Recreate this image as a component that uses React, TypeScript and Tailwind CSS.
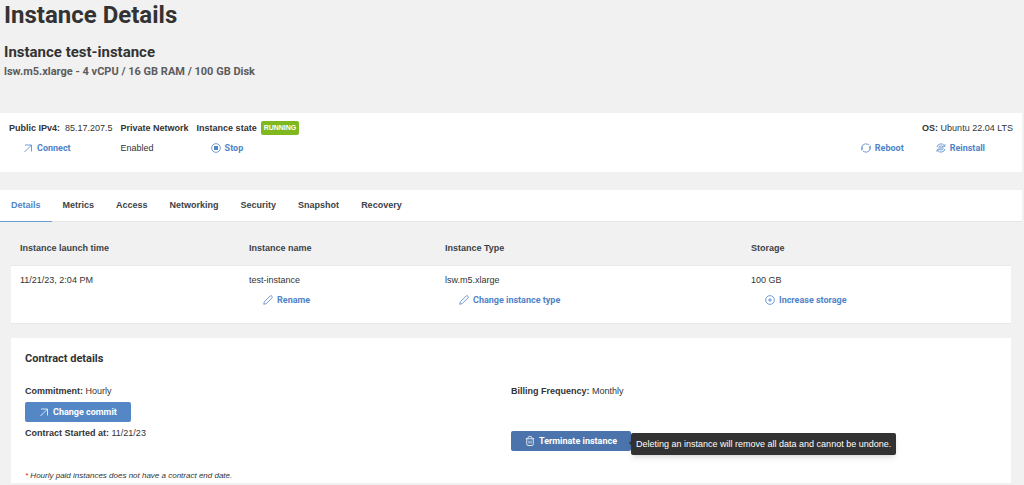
import type { ReactNode } from 'react';

const heading = "font-['Roboto','Noto_Sans',sans-serif]";

type IconProps = { children: ReactNode };

function Icon({ children }: IconProps) {
  return (
    <svg
      viewBox="0 0 20 20"
      className="size-[10px] shrink-0"
      fill="none"
      stroke="currentColor"
      strokeWidth="1.6"
      aria-hidden="true"
    >
      {children}
    </svg>
  );
}

const ArrowIcon = () => (
  <Icon>
    <path d="M4 4h13v13M17 4L3 18" />
  </Icon>
);

const StopIcon = () => (
  <Icon>
    <circle cx="10" cy="10" r="8.7" />
    <rect x="6" y="6" width="8" height="8" fill="currentColor" stroke="none" />
  </Icon>
);

const RebootIcon = () => (
  <Icon>
    <path d="M2.400 13.500A8.200 8.200 0 0 1 13.500 2.600M17.600 6.500A8.200 8.200 0 0 1 6.500 17.400" />
    <path d="M2.200 7.500v6h-2M17.800 12.500v-6h2M4 16l2.500 1.400M16 4l-2.500-1.400" />
  </Icon>
);

const ReinstallIcon = () => (
  <Icon>
    <path d="M2 8A8.200 8.200 0 0 1 17 5.700M18 12A8.200 8.200 0 0 1 3 14.300" />
    <path d="M18 2.500v4h-4M2 17.500v-4h4" />
    <path d="M5.800 10a4.200 4.200 0 0 1 8.400 0a4.200 4.200 0 0 1-8.400 0" />
    <circle cx="10" cy="10" r="1.6" fill="currentColor" stroke="none" />
  </Icon>
);

const PencilIcon = () => (
  <Icon>
    <path d="M1.500 18.500l1.200-5L14.200 2a2.200 2.200 0 0 1 3.100 0l.7.7a2.200 2.200 0 0 1 0 3.100L6.500 17.300z" />
  </Icon>
);

const PlusIcon = () => (
  <Icon>
    <circle cx="10" cy="10" r="8.7" />
    <path d="M10 6v8M6 10h8" />
  </Icon>
);

const TrashIcon = () => (
  <Icon>
    <path d="M1.500 5.500h17M6 5V3.200C6 2 6.800 1.200 8 1.200h4c1.200 0 2 .8 2 2V5" />
    <path d="M3.500 5.500v11c0 1.500 1 2.500 2.500 2.500h8c1.500 0 2.500-1 2.500-2.500v-11M8 9.500v5.500M12 9.500v5.500" />
  </Icon>
);

function LinkButton({ icon, children }: { icon: ReactNode; children: ReactNode }) {
  return (
    <button
      type="button"
      className={`${heading} flex h-5 cursor-pointer items-center gap-1 whitespace-nowrap px-3.5 text-[9px] font-bold text-[#4f84c8]`}
    >
      {icon}
      {children}
    </button>
  );
}

const tabs = ['Details', 'Metrics', 'Access', 'Networking', 'Security', 'Snapshot', 'Recovery'];

export default function App() {
  return (
    <div className="min-h-screen bg-[#f1f1f1] pr-0.5 pb-0.5 font-['Liberation_Sans',Arial,sans-serif] text-[9px] leading-5 text-[#333]">
      <header className={`${heading} h-[113px] pl-1`}>
        <h1 className="text-2xl leading-[30px] font-bold">Instance Details</h1>
        <h2 className="mt-3 text-[15px] leading-5 font-bold">Instance test-instance</h2>
        <p className="text-[11px] font-bold text-[#5c5c5c]">lsw.m5.xlarge - 4 vCPU / 16 GB RAM / 100 GB Disk</p>
      </header>

      <section className="flex justify-between bg-white px-[9px] pt-[5px] pb-[14px]">
        <div className="flex gap-2">
          <div>
            <p>
              <b>Public IPv4:</b>&nbsp; 85.17.207.5
            </p>
            <LinkButton icon={<ArrowIcon />}>Connect</LinkButton>
          </div>
          <div>
            <p className="font-bold">Private Network</p>
            <p>Enabled</p>
          </div>
          <div>
            <p className="flex items-center gap-1">
              <b>Instance state</b>
              <span className="rounded-[2px] bg-[#80b91f] px-[3px] text-[7px] leading-[14px] font-bold text-white">
                RUNNING
              </span>
            </p>
            <LinkButton icon={<StopIcon />}>Stop</LinkButton>
          </div>
        </div>
        <div>
          <p className="text-right">
            <b>OS:</b> Ubuntu 22.04 LTS
          </p>
          <div className="flex gap-1 pr-3.5">
            <LinkButton icon={<RebootIcon />}>Reboot</LinkButton>
            <LinkButton icon={<ReinstallIcon />}>Reinstall</LinkButton>
          </div>
        </div>
      </section>

      <nav className="mt-[18px] flex border-b border-[#e6e6e6] bg-white">
        {tabs.map((tab, i) => (
          <a
            key={tab}
            href={`#${tab.toLowerCase()}`}
            aria-current={i === 0 ? 'page' : undefined}
            className={
              i === 0
                ? '-mb-px border-b border-[#6f9ad2] px-[11px] leading-[31px] font-bold text-[#4f84c8]'
                : 'px-[11px] leading-[31px] font-bold text-[#3c4248]'
            }
          >
            {tab}
          </a>
        ))}
      </nav>

      <main className="px-[11px]">
        <table className="w-full table-fixed border-collapse text-left">
          <thead>
            <tr className="h-[43px] border-b border-[#e8e8e8] text-[#3c4248]">
              <th className="w-[22.9%] pt-2.5 pl-[9px]">Instance launch time</th>
              <th className="w-[19.6%] pt-2.5 pl-[9px]">Instance name</th>
              <th className="w-[30.6%] pt-2.5 pl-[9px]">Instance Type</th>
              <th className="pt-2.5 pl-[9px]">Storage</th>
            </tr>
          </thead>
          <tbody>
            <tr className="border-b border-[#e8e8e8] bg-white align-top">
              <td className="pt-1 pb-[13px] pl-[9px]">11/21/23, 2:04 PM</td>
              <td className="pt-1 pb-[13px] pl-[9px]">
                test-instance
                <LinkButton icon={<PencilIcon />}>Rename</LinkButton>
              </td>
              <td className="pt-1 pb-[13px] pl-[9px]">
                lsw.m5.xlarge
                <LinkButton icon={<PencilIcon />}>Change instance type</LinkButton>
              </td>
              <td className="pt-1 pb-[13px] pl-[9px]">
                100 GB
                <LinkButton icon={<PlusIcon />}>Increase storage</LinkButton>
              </td>
            </tr>
          </tbody>
        </table>

        <section className="mt-[14px] bg-white px-3.5 pt-[11px]">
          <h3 className={`${heading} text-[11px] font-bold`}>Contract details</h3>
          <div className="mt-3 grid grid-cols-2">
            <div>
              <p>
                <b>Commitment:</b> Hourly
              </p>
              <button
                type="button"
                className={`${heading} mt-px mb-px flex h-5 cursor-pointer items-center gap-1 rounded-[2px] bg-[#5586c6] px-3.5 text-[9px] font-bold text-white`}
              >
                <ArrowIcon />
                Change commit
              </button>
              <p>
                <b>Contract Started at:</b> 11/21/23
              </p>
            </div>
            <div>
              <p>
                <b>Billing Frequency:</b> Monthly
              </p>
              <div className="relative mt-[30px] w-fit">
                <button
                  type="button"
                  aria-describedby="terminate-note"
                  className={`${heading} flex h-5 cursor-pointer items-center gap-1 rounded-[2px] bg-[#4a74ab] px-3.5 text-[9px] font-bold whitespace-nowrap text-white`}
                >
                  <TrashIcon />
                  Terminate instance
                </button>
                <div
                  id="terminate-note"
                  role="tooltip"
                  className="absolute top-0.5 left-full rounded-[2px] bg-[#323232] px-[5px] leading-[22px] whitespace-nowrap text-white shadow-md"
                >
                  <span className="absolute top-2 -left-0.5 border-y-2 border-r-2 border-y-transparent border-r-[#323232]" />
                  Deleting an instance will remove all data and cannot be undone.
                </div>
              </div>
            </div>
          </div>
          <p className="mt-[18px] text-[8px] leading-[14px] italic">
            <span className="text-[#e02020]">*</span> Hourly paid instances does not have a contract end date.
          </p>
        </section>
      </main>
    </div>
  );
}
